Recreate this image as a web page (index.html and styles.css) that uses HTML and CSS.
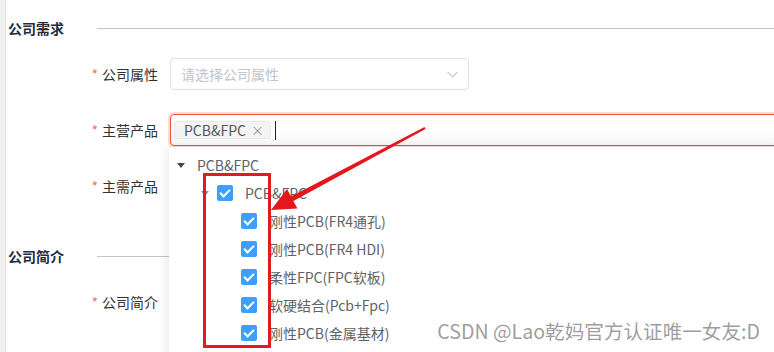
FILE: index.html
```html
<!DOCTYPE html>
<html lang="zh-CN">
<head>
<meta charset="utf-8">
<title>公司需求</title>
<link rel="stylesheet" href="styles.css">
</head>
<body>
<div class="page">
  <div class="strip"></div>
  <main class="form">
    <div class="section-title first"><span class="section-name">公司需求</span><i class="rule"></i></div>
    <div class="row">
      <label class="label"><em>*</em>公司属性</label>
      <div class="select">
        <span class="placeholder">请选择公司属性</span>
        <svg class="chevron" width="11" height="7" viewBox="0 0 11 7"><polyline points="0.5,0.8 5.5,5.8 10.5,0.8" fill="none" stroke="#c0c4cc" stroke-width="1.1"/></svg>
      </div>
    </div>
    <div class="row">
      <label class="label"><em>*</em>主营产品</label>
      <div class="tags-input">
        <span class="tag">PCB&amp;FPC<span class="tag-close">×</span></span>
        <span class="cursor"></span>
      </div>
    </div>
    <div class="row">
      <label class="label"><em>*</em>主需产品</label>
    </div>
    <div class="section-title"><span class="section-name">公司简介</span><i class="rule"></i></div>
    <div class="row">
      <label class="label"><em>*</em>公司简介</label>
    </div>
  </main>

  <div class="dropdown">
    <div class="node lvl0"><span class="expander"><i class="tri"></i></span><span class="node-text">PCB&amp;FPC</span></div>
    <div class="node lvl1"><span class="expander"><i class="tri light"></i></span><span class="check"></span><span class="node-text">PCB&amp;FPC</span></div>
    <div class="node lvl2"><span class="expander"></span><span class="check"></span><span class="node-text">刚性PCB(FR4通孔)</span></div>
    <div class="node lvl2"><span class="expander"></span><span class="check"></span><span class="node-text">刚性PCB(FR4 HDI)</span></div>
    <div class="node lvl2"><span class="expander"></span><span class="check"></span><span class="node-text">柔性FPC(FPC软板)</span></div>
    <div class="node lvl2"><span class="expander"></span><span class="check"></span><span class="node-text">软硬结合(Pcb+Fpc)</span></div>
    <div class="node lvl2"><span class="expander"></span><span class="check"></span><span class="node-text">刚性PCB(金属基材)</span></div>
  </div>

  <div class="annot-box"></div>
  <svg class="annot-arrow" width="774" height="352" viewBox="0 0 774 352">
    <polygon points="271,210 297.4,208.4 293.4,200.9 425.5,128.9 424.5,127.1 291,196.5 287,189" fill="#e5161e"/>
  </svg>

  <div class="watermark">CSDN @Lao乾妈官方认证唯一女友:D</div>
</div>
</body>
</html>
```

FILE: styles.css
```css
* { box-sizing: border-box; }
html, body {
  margin: 0;
  padding: 0;
  background: #fff;
  overflow: hidden;
}
body {
  font-family: "Noto Sans CJK SC", "Noto Sans", sans-serif;
  font-size: 14px;
  color: #303133;
}
.page {
  position: relative;
  width: 774px;
  height: 352px;
  display: flex;
  overflow: hidden;
}
.strip {
  width: 6px;
  flex: none;
  background: #f0f0f0;
  border-right: 1px solid #e6e6e6;
}
.form {
  flex: 1;
  padding-left: 2px;
  display: flex;
  flex-direction: column;
}
.section-title {
  display: flex;
  align-items: center;
  height: 20px;
  margin-top: 20px;
  margin-bottom: 20px;
}
.section-title.first { margin-top: 18px; }
.section-name {
  width: 89px;
  font-weight: bold;
  font-size: 14px;
  color: #1f2d3d;
  line-height: 20px;
}
.rule {
  flex: 1;
  height: 1px;
  background: #c4c4c4;
}
.row {
  display: flex;
  align-items: center;
  height: 32px;
  margin-bottom: 24px;
}
.row:last-child { margin-bottom: 0; }
.label {
  width: 162px;
  flex: none;
  padding-right: 12px;
  text-align: right;
  color: #303133;
  font-size: 14px;
  line-height: 32px;
}
.label em {
  font-style: normal;
  color: #f56c6c;
  margin-right: 4px;
}
.select {
  width: 299px;
  height: 32px;
  border: 1px solid #dcdfe6;
  border-radius: 4px;
  display: flex;
  align-items: center;
  justify-content: space-between;
  padding: 0 10px 0 10px;
}
.placeholder {
  color: #c0c4cc;
  font-size: 14px;
}
.tags-input {
  width: 640px;
  height: 32px;
  flex: none;
  border: 1px solid #f0502f;
  border-radius: 4px;
  box-shadow: 0 0 0 2px #fcdcd5;
  display: flex;
  align-items: center;
  padding-left: 3px;
  background: linear-gradient(#fff 40%, #f8f8f8);
}
.tag {
  display: inline-flex;
  align-items: center;
  height: 18px;
  padding: 0 6px 0 9px;
  background: #f4f4f5;
  border: 1px solid #e9e9eb;
  border-radius: 3px;
  color: #55575c;
  font-size: 14px;
  line-height: 16px;
}
.tag-close {
  margin-left: 5px;
  color: #909399;
  font-size: 13px;
}
.cursor {
  width: 1px;
  height: 19px;
  margin-left: 4px;
  background: #222;
}
.dropdown {
  position: absolute;
  left: 169px;
  top: 147px;
  width: 700px;
  height: 260px;
  background: #fff;
  box-shadow: 0 2px 12px rgba(0, 0, 0, 0.12);
  padding-top: 4px;
}
.node {
  display: flex;
  align-items: center;
  height: 28px;
  color: #606266;
  font-size: 14px;
}
.lvl1 { padding-left: 24px; }
.lvl2 { padding-left: 48px; }
.expander {
  width: 24px;
  height: 28px;
  flex: none;
  display: flex;
  align-items: center;
  justify-content: center;
}
.tri {
  width: 0;
  height: 0;
  border-left: 4px solid transparent;
  border-right: 4px solid transparent;
  border-top: 5px solid #45474c;
}
.tri.light { border-top-color: #8a8c91; }
.lvl0 .node-text { margin-left: 4px; }
.check {
  width: 16px;
  height: 16px;
  flex: none;
  border-radius: 2px;
  background: #409eff;
  position: relative;
}
.check::after {
  content: "";
  position: absolute;
  left: 5px;
  top: 2px;
  width: 4px;
  height: 8px;
  border-right: 2px solid #fff;
  border-bottom: 2px solid #fff;
  transform: rotate(45deg);
}
.check + .node-text { margin-left: 12px; }
.annot-box {
  position: absolute;
  left: 203px;
  top: 173px;
  width: 68px;
  height: 175px;
  border: 3px solid #e31a1f;
}
.annot-arrow {
  position: absolute;
  left: 0;
  top: 0;
  pointer-events: none;
}
.watermark {
  position: absolute;
  right: 14px;
  top: 318px;
  font-size: 19.6px;
  line-height: 26px;
  color: rgba(140, 140, 140, 0.85);
  white-space: nowrap;
}
```
